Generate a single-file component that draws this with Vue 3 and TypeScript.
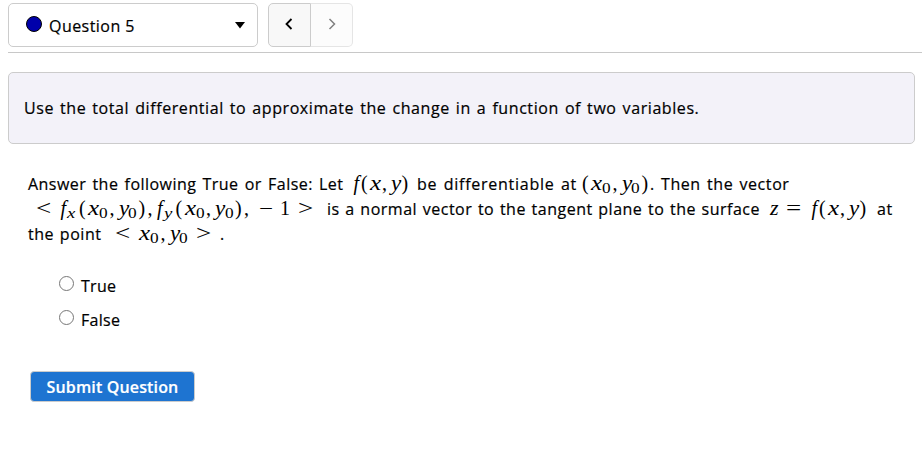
<script setup lang="ts">
import { ref } from 'vue'

type Token = {
  text: string
  kind: string
}

const answer = ref('')
const options = ['True', 'False']

const kinds: Record<string, string> = {
  f: 'fn',
  x: 'x',
  y: 'y',
  z: 'z',
  '(': 'paren',
  ')': 'paren',
  ',': 'comma',
  '<': 'rel lt',
  '>': 'rel gt',
  '=': 'rel eq',
  '−': 'minus',
  '1': 'one',
}

// an underscore marks the next character as a subscript
function tokenize(source: string): Token[] {
  const tokens: Token[] = []
  for (let i = 0; i < source.length; i++) {
    if (source[i] === '_') {
      i++
      tokens.push({ text: source[i], kind: source[i] === '0' ? 'sub zero' : 'sub' })
    } else {
      tokens.push({ text: source[i], kind: kinds[source[i]] })
    }
  }
  return tokens
}

const fxy = tokenize('f(x,y)')
const point = tokenize('(x_0,y_0)')
const vector = tokenize('<f_x(x_0,y_0),f_y(x_0,y_0),−1>')
const surface = tokenize('z=f(x,y)')
const pointVector = tokenize('<x_0,y_0>')
</script>

<template>
  <div class="page">
    <header class="toolbar">
      <button class="picker">
        <span class="dot"></span>
        <span class="picker-label">Question 5</span>
        <svg class="caret" width="10" height="7" viewBox="0 0 10 7"><path d="M0 0H10L5 6.5Z" /></svg>
      </button>
      <div class="pager">
        <button class="prev" aria-label="Previous">
          <svg width="8" height="12" viewBox="0 0 8 12"><path d="M6.5 1 1.5 6 6.5 11" /></svg>
        </button>
        <button class="next" aria-label="Next" disabled>
          <svg width="8" height="12" viewBox="0 0 8 12"><path d="M1.5 1 6.5 6 1.5 11" /></svg>
        </button>
      </div>
    </header>

    <section class="intro">
      <span class="intro-text">Use the total differential to approximate the change in a function of two variables.</span>
    </section>

    <main class="question">
      <div class="line first">
        <span class="lead">Answer the following True or False: Let</span>
        <span class="math"><span v-for="(t, i) in fxy" :key="i" :class="t.kind">{{ t.text }}</span></span>
        <span class="differentiable">be differentiable at</span>
        <span class="math"><span v-for="(t, i) in point" :key="i" :class="t.kind">{{ t.text }}</span></span>
        <span class="then">. Then the vector</span>
      </div>
      <div class="line second">
        <span class="math"><span v-for="(t, i) in vector" :key="i" :class="t.kind">{{ t.text }}</span></span>
        <span class="normal">is a normal vector to the tangent plane to the surface</span>
        <span class="math"><span v-for="(t, i) in surface" :key="i" :class="t.kind">{{ t.text }}</span></span>
        <span class="at">at</span>
      </div>
      <div class="line third">
        <span class="the-point">the point</span>
        <span class="math"><span v-for="(t, i) in pointVector" :key="i" :class="t.kind">{{ t.text }}</span></span>
        <span>.</span>
      </div>

      <div class="options">
        <label v-for="option in options" :key="option">
          <input v-model="answer" type="radio" name="answer" :value="option" />
          <span>{{ option }}</span>
        </label>
      </div>

      <button class="submit">Submit Question</button>
    </main>
  </div>
</template>

<style>
body {
  margin: 0;
  background: #fff;
}
</style>

<style scoped>
.page {
  height: 455px;
  box-sizing: border-box;
  padding: 3px 0 0 8px;
  overflow: hidden;
  font-family: "Open Sans", "Noto Sans", sans-serif;
  font-size: 16px;
  color: #000;
  -webkit-text-stroke: 0.2px;
}

button {
  font: inherit;
  color: inherit;
  margin: 0;
}

.toolbar {
  display: flex;
  gap: 10px;
  height: 49px;
  border-bottom: 1px solid #c8c8c8;
}

.picker {
  display: flex;
  align-items: center;
  box-sizing: border-box;
  width: 250px;
  height: 44px;
  padding: 0 12px 0 17px;
  border: 1px solid #ccc;
  border-radius: 5px;
  background: #fff;
}

.dot {
  box-sizing: border-box;
  width: 16px;
  height: 16px;
  margin: 0 7px 3px 0;
  border: 1px solid #000;
  border-radius: 50%;
  background: #00a;
}

.picker-label {
  padding-top: 2px;
  letter-spacing: 0.45px;
}

.caret {
  margin-left: auto;
}

.pager {
  display: flex;
  height: 44px;
}

.pager button {
  display: flex;
  align-items: center;
  justify-content: center;
  box-sizing: border-box;
  padding: 0 0 2px;
  border: 1px solid #ccc;
  background: #f8f8f8;
}

.pager .prev {
  width: 43px;
  padding-right: 2px;
  border-radius: 5px 0 0 5px;
}

.pager .next {
  width: 42px;
  border-color: #e5e5e5;
  border-left: 0;
  border-radius: 0 5px 5px 0;
  background: #fcfcfc;
}

.pager path {
  fill: none;
  stroke: #000;
  stroke-width: 1.8;
}

.pager .next path {
  stroke: #808080;
  stroke-width: 1.5;
}

.intro {
  display: flex;
  align-items: center;
  box-sizing: border-box;
  width: 907px;
  height: 72px;
  margin-top: 19px;
  padding-left: 15px;
  border: 1px solid #ccc;
  border-radius: 5px;
  background: #f3f2f9;
}

.intro-text {
  letter-spacing: 0.58px;
  word-spacing: 1.3px;
}

.question {
  padding: 28px 0 0 20px;
}

.line {
  display: grid;
  align-items: baseline;
  height: 25px;
  line-height: 25px;
  white-space: nowrap;
}

.first {
  grid-template-columns: 325px 64px 165px 68px auto;
}

.second {
  grid-template-columns: 298px 444px 106px auto;
}

.third {
  grid-template-columns: 87px 105px auto;
}

.lead {
  letter-spacing: 0.46px;
  word-spacing: 1.6px;
}

.differentiable {
  letter-spacing: 0.75px;
  word-spacing: 1.5px;
}

.then {
  letter-spacing: 0.58px;
  word-spacing: 1.5px;
}

.normal {
  padding-left: 1px;
  letter-spacing: 0.5px;
  word-spacing: 1px;
}

.at {
  padding-left: 1px;
  letter-spacing: 0.5px;
}

.the-point {
  letter-spacing: 0.55px;
  word-spacing: 1px;
}

.math {
  display: flex;
  align-items: baseline;
  font-family: "Liberation Serif", serif;
  font-size: 20px;
  line-height: 20px;
  -webkit-text-stroke: 0;
}

.second .math:first-child {
  padding-left: 8px;
}

.math span {
  flex: none;
  transform-origin: left;
}

.fn {
  width: 7.5px;
  margin-left: 0.5px;
  font-style: italic;
}

.x {
  width: 12px;
  font-style: italic;
  transform: scaleX(1.25);
}

.y {
  width: 10.5px;
  font-style: italic;
  transform: scaleX(1.15);
}

.z {
  width: 10px;
  font-style: italic;
  transform: scaleX(1.1);
}

.paren {
  width: 9px;
}

.comma {
  width: 9px;
}

.math .sub {
  width: 12px;
  margin-left: -1px;
  font-size: 15px;
  font-style: italic;
  transform: translateY(3px) scaleX(1.25);
}

.math .zero {
  width: 10.5px;
  font-style: normal;
  transform: translateY(3px) scaleX(1.15);
}

.rel {
  width: 24px;
  transform: scaleX(1.35);
}

.gt {
  width: 15px;
  margin-left: 6px;
}

.eq {
  width: 25px;
  margin-left: 6px;
}

.minus {
  width: 21px;
  margin-left: 6px;
  transform: scaleX(1.25);
}

.one {
  width: 12px;
}

.options {
  display: flex;
  flex-direction: column;
  margin: 24px 0 0 31px;
}

.options label {
  display: flex;
  height: 34px;
}

.options input {
  width: 15px;
  height: 15px;
  margin: 5px 7px 0 0;
}

.options span {
  line-height: 30px;
  letter-spacing: 0.3px;
}

.submit {
  box-sizing: border-box;
  width: 165px;
  height: 31px;
  margin: 32px 0 0 2px;
  padding: 0;
  border: 1px solid #ccc;
  border-radius: 4px;
  background: #1e74d1;
  color: #fff;
  font-weight: 600;
  letter-spacing: 0.15px;
}
</style>
